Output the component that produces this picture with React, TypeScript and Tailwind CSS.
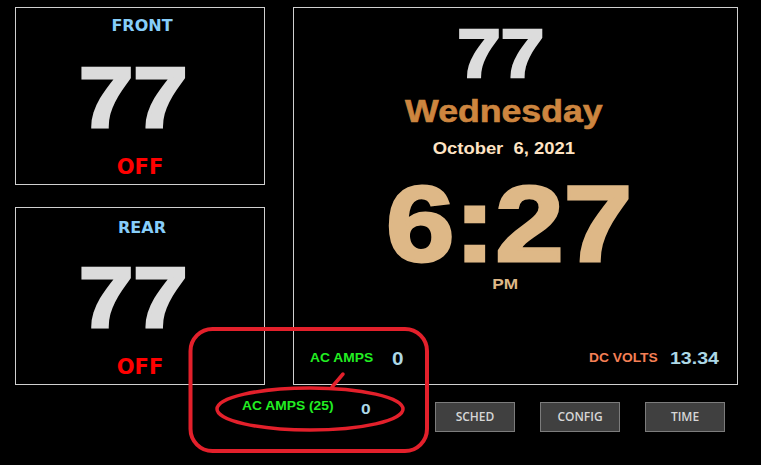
import React from "react";

const arial = { fontFamily: '"Liberation Sans", Arial, sans-serif' };
const dejavu = { fontFamily: '"DejaVu Sans", Verdana, sans-serif' };

function Wide({ children, className = "" }: { children: React.ReactNode; className?: string }) {
  return <span className={"inline-block scale-x-[1.15] " + className}>{children}</span>;
}

function TempBox({ label, rear }: { label: string; rear?: boolean }) {
  return (
    <div className="w-[250px] h-[178px] border border-[#d0d0d0] flex flex-col items-center">
      <div
        className={
          "text-[16px] leading-none font-bold text-[#87cefa] ml-[4px] " +
          (rear ? "mt-[12px]" : "mt-[10px]")
        }
        style={dejavu}
      >
        {label}
      </div>
      <div
        className={
          "text-[85px] leading-none font-bold text-[#dcdcdc] pr-[13px] [-webkit-text-stroke:3px_#dcdcdc] " +
          (rear ? "mt-[19px]" : "mt-[21px]")
        }
        style={arial}
      >
        <Wide>77</Wide>
      </div>
      <div className="text-[21px] leading-none font-bold text-[#ff0000] mt-[17px]" style={dejavu}>
        OFF
      </div>
    </div>
  );
}

function Btn({ label }: { label: string }) {
  return (
    <div
      className="w-[80px] h-[30px] bg-[#404040] border border-[#7c7c7c] flex items-center justify-center text-[12px] font-semibold text-[#d6d6d6]"
      style={{ fontFamily: '"Open Sans", "Noto Sans", sans-serif' }}
    >
      {label}
    </div>
  );
}

export default function App() {
  return (
    <div className="relative w-[761px] h-[465px] bg-black overflow-hidden pt-[7px] pl-[15px]">
      <div className="flex gap-[28px]">
        <div className="flex flex-col gap-[22px]">
          <TempBox label="FRONT" />
          <TempBox label="REAR" rear />
        </div>
        <div className="w-[445px] h-[378px] border border-[#d0d0d0] flex flex-col">
          <div className="flex flex-col items-center pr-[23px]" style={arial}>
            <div className="text-[68px] leading-none font-bold text-[#dcdcdc] mt-[11px] pr-[6px] [-webkit-text-stroke:2.5px_#dcdcdc]">
              <Wide>77</Wide>
            </div>
            <div className="text-[31px] leading-none font-bold text-[#cd853f] mt-[9px] [-webkit-text-stroke:0.6px_#cd853f]">
              <Wide>Wednesday</Wide>
            </div>
            <div className="text-[16px] leading-none font-bold text-[#ffe4c4] mt-[14px] whitespace-pre">
              <Wide>October  6, 2021</Wide>
            </div>
            <div className="text-[107px] leading-[96px] font-bold text-[#deb887] mt-[19px] pl-[10px] [-webkit-text-stroke:3px_#deb887]">
              <Wide>6:27</Wide>
            </div>
            <div className="text-[15px] leading-none font-bold text-[#deb887] mt-[4px] pl-[2px]">
              <Wide>PM</Wide>
            </div>
          </div>
          <div className="flex items-start justify-between mt-[59px] font-bold leading-none" style={arial}>
            <div className="flex items-start pl-[16px]">
              <div className="w-[82px] text-[12px] text-[#22ee22] mt-[2px]">
                <Wide className="origin-left">AC AMPS</Wide>
              </div>
              <div className="text-[18px] text-[#add8e6]">
                <Wide className="origin-left">0</Wide>
              </div>
            </div>
            <div className="flex items-start pr-[18px]">
              <div className="w-[81px] text-[12px] text-[#f47f55] mt-[2px]">
                <Wide className="origin-left">DC VOLTS</Wide>
              </div>
              <div className="w-[49px] text-[17px] text-[#add8e6]">
                <Wide className="origin-left">13.34</Wide>
              </div>
            </div>
          </div>
        </div>
      </div>
      <div className="flex items-start mt-[17px] pl-[227px] font-bold leading-none" style={arial}>
        <div className="w-[119px] text-[12px] text-[#22ee22] -mt-[2px]">
          <Wide className="origin-left">AC AMPS (25)</Wide>
        </div>
        <div className="w-[74px] text-[15px] text-[#add8e6] -mt-[1px]">
          <Wide className="origin-left">0</Wide>
        </div>
        <div className="flex gap-[25px]">
          <Btn label="SCHED" />
          <Btn label="CONFIG" />
          <Btn label="TIME" />
        </div>
      </div>
      <svg
        className="absolute inset-0 pointer-events-none"
        width="761"
        height="465"
        viewBox="0 0 761 465"
      >
        <rect x="190.5" y="329" width="236.5" height="122" rx="22" fill="none" stroke="#e3202b" strokeWidth="4" />
        <ellipse cx="310" cy="409" rx="93" ry="21" fill="none" stroke="#e3202b" strokeWidth="3.5" />
        <line x1="343" y1="374" x2="332" y2="387" stroke="#e3202b" strokeWidth="3.5" strokeLinecap="round" />
      </svg>
    </div>
  );
}
